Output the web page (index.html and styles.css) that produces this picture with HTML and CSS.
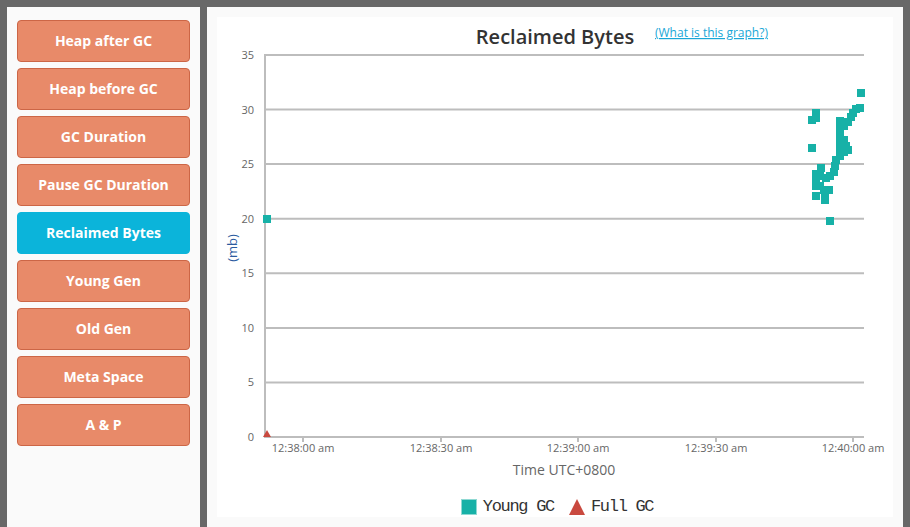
FILE: index.html
```html
<!DOCTYPE html>
<html>
<head>
<meta charset="utf-8">
<link rel="stylesheet" href="styles.css">
</head>
<body>
<div class="app">
  <nav class="sidebar">
    <button class="nav-btn">Heap after GC</button>
    <button class="nav-btn">Heap before GC</button>
    <button class="nav-btn">GC Duration</button>
    <button class="nav-btn">Pause GC Duration</button>
    <button class="nav-btn active">Reclaimed Bytes</button>
    <button class="nav-btn">Young Gen</button>
    <button class="nav-btn">Old Gen</button>
    <button class="nav-btn">Meta Space</button>
    <button class="nav-btn">A &amp; P</button>
  </nav>
  <main class="main">
    <div class="chart">
      <svg class="chart-svg" width="676" height="500" viewBox="0 0 676 500">
        <text class="title" x="338" y="27" text-anchor="middle">Reclaimed Bytes</text>
        <text class="help-link" x="438" y="20">(What is this graph?)</text>
        <g class="grid">
          <line x1="48" x2="647" y1="38" y2="38"/>
          <line x1="48" x2="647" y1="92.6" y2="92.6"/>
          <line x1="48" x2="647" y1="147.1" y2="147.1"/>
          <line x1="48" x2="647" y1="201.7" y2="201.7"/>
          <line x1="48" x2="647" y1="256.3" y2="256.3"/>
          <line x1="48" x2="647" y1="310.9" y2="310.9"/>
          <line x1="48" x2="647" y1="365.4" y2="365.4"/>
          <line x1="48" x2="647" y1="420" y2="420"/>
          <line x1="48" x2="48" y1="37" y2="421"/>
          <line x1="86" x2="86" y1="420" y2="425"/>
          <line x1="224" x2="224" y1="420" y2="425"/>
          <line x1="361" x2="361" y1="420" y2="425"/>
          <line x1="499" x2="499" y1="420" y2="425"/>
          <line x1="636" x2="636" y1="420" y2="425"/>
        </g>
        <g class="ylabels" text-anchor="end">
          <text x="37" y="42">35</text>
          <text x="37" y="96.6">30</text>
          <text x="37" y="151.1">25</text>
          <text x="37" y="205.7">20</text>
          <text x="37" y="260.3">15</text>
          <text x="37" y="314.9">10</text>
          <text x="37" y="369.4">5</text>
          <text x="37" y="424">0</text>
        </g>
        <g class="xlabels" text-anchor="middle">
          <text x="86" y="435">12:38:00 am</text>
          <text x="224" y="435">12:38:30 am</text>
          <text x="361" y="435">12:39:00 am</text>
          <text x="499" y="435">12:39:30 am</text>
          <text x="636" y="435">12:40:00 am</text>
        </g>
        <text class="axis-title" x="347" y="458" text-anchor="middle">Time UTC+0800</text>
        <text class="yaxis-title" transform="translate(20 231) rotate(-90)" text-anchor="middle">(mb)</text>
        <g class="young">
          <rect x="46" y="198" width="8" height="8"/>
          <rect x="640" y="72" width="8" height="8"/>
          <rect x="639" y="87" width="8" height="8"/>
          <rect x="635" y="88" width="8" height="8"/>
          <rect x="632" y="92" width="8" height="8"/>
          <rect x="630" y="96" width="8" height="8"/>
          <rect x="627" y="101" width="8" height="8"/>
          <rect x="623" y="105" width="8" height="8"/>
          <rect x="619" y="100" width="8" height="8"/>
          <rect x="619" y="107" width="8" height="8"/>
          <rect x="619" y="114" width="8" height="8"/>
          <rect x="619" y="121" width="8" height="8"/>
          <rect x="619" y="129" width="8" height="8"/>
          <rect x="623" y="119" width="8" height="8"/>
          <rect x="625" y="125" width="8" height="8"/>
          <rect x="627" y="129" width="8" height="8"/>
          <rect x="623" y="131" width="8" height="8"/>
          <rect x="619" y="135" width="8" height="8"/>
          <rect x="615" y="139" width="8" height="8"/>
          <rect x="614" y="145" width="8" height="8"/>
          <rect x="613" y="151" width="8" height="8"/>
          <rect x="609" y="155" width="8" height="8"/>
          <rect x="605" y="157" width="8" height="8"/>
          <rect x="600" y="147" width="8" height="8"/>
          <rect x="599" y="155" width="8" height="8"/>
          <rect x="595" y="153" width="8" height="8"/>
          <rect x="595" y="159" width="8" height="8"/>
          <rect x="595" y="165" width="8" height="8"/>
          <rect x="599" y="165" width="8" height="8"/>
          <rect x="603" y="169" width="8" height="8"/>
          <rect x="608" y="169" width="8" height="8"/>
          <rect x="595" y="175" width="8" height="8"/>
          <rect x="604" y="179" width="8" height="8"/>
          <rect x="604" y="174" width="8" height="8"/>
          <rect x="591" y="99" width="8" height="8"/>
          <rect x="595" y="92" width="8" height="8"/>
          <rect x="595" y="97" width="8" height="8"/>
          <rect x="591" y="127" width="8" height="8"/>
          <rect x="609" y="200" width="8" height="8"/>
        </g>
        <polygon class="full" points="46,420 54,420 50,413"/>
      </svg>
      <div class="legend">
        <span class="legend-item"><span class="swatch-square"></span>Young GC</span>
        <span class="legend-item"><span class="swatch-triangle"></span>Full GC</span>
      </div>
    </div>
  </main>
</div>
</body>
</html>
```
FILE: styles.css
```css
html, body {
  margin: 0;
  padding: 0;
}
body {
  background: #686868;
  width: 910px;
  height: 527px;
  overflow: hidden;
  font-family: "Open Sans", "Liberation Sans", sans-serif;
}
.app {
  display: flex;
  gap: 7px;
  padding: 7px 7px 0 7px;
  height: 520px;
}
.sidebar {
  width: 173px;
  background: #fafafa;
  padding: 13px 10px 0 10px;
  display: flex;
  flex-direction: column;
  gap: 6px;
}
.nav-btn {
  height: 42px;
  width: 173px;
  background: #e88a69;
  border: 1px solid #cc6646;
  border-radius: 4px;
  color: #fff;
  font-family: "Open Sans", sans-serif;
  font-weight: 700;
  font-size: 14px;
  padding: 0 0 2px 0;
  cursor: pointer;
}
.nav-btn.active {
  background: #0bb4da;
  border-color: #0bb4da;
}
.main {
  flex: 1;
  background: #fafafa;
  padding: 10px;
}
.chart {
  width: 676px;
  height: 500px;
  background: #fff;
  position: relative;
}
.chart-svg {
  display: block;
}
.title {
  font-family: "Open Sans", sans-serif;
  font-size: 20px;
  font-weight: 600;
  fill: #333;
}
.help-link {
  font-family: "Open Sans", sans-serif;
  font-size: 12px;
  fill: #19a7d7;
  text-decoration: underline;
}
.grid line {
  stroke: #bdbdbd;
  stroke-width: 2;
}
.ylabels text, .xlabels text {
  font-family: "Open Sans", sans-serif;
  font-size: 11px;
  fill: #666;
}
.axis-title {
  font-family: "Open Sans", sans-serif;
  font-size: 14px;
  fill: #666;
}
.yaxis-title {
  font-family: "Open Sans", sans-serif;
  font-size: 13px;
  fill: #2a5a9e;
}
.young rect {
  fill: #17b1a7;
}
.full {
  fill: #c9493f;
}
.legend {
  position: absolute;
  left: 0;
  right: 0;
  top: 480px;
  display: flex;
  justify-content: center;
  gap: 15px;
  font-family: "Liberation Mono", monospace;
  font-size: 17px;
  letter-spacing: -1.3px;
  color: #333;
  padding-left: 4px;
}
.legend-item {
  display: flex;
  align-items: center;
  gap: 6px;
  white-space: pre;
}
.swatch-square {
  width: 14px;
  height: 14px;
  background: #17b1a7;
  border: 1px solid #8fd9d3;
}
.swatch-triangle {
  width: 0;
  height: 0;
  border-left: 8px solid transparent;
  border-right: 8px solid transparent;
  border-bottom: 16px solid #c9493f;
}
```
